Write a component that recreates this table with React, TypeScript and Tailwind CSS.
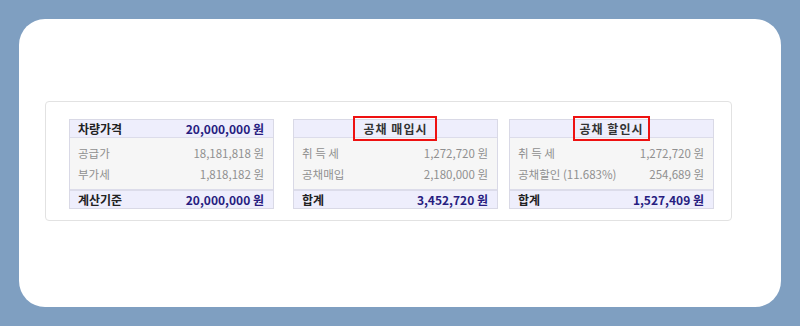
const font = { fontFamily: '"Noto Sans CJK KR", "Noto Sans", sans-serif' };

type Row = { label: string; value: string };

function PriceTable({
  title,
  titleValue,
  rows,
  totalLabel,
  totalValue,
  mark,
}: {
  title: string;
  titleValue?: string;
  rows: Row[];
  totalLabel: string;
  totalValue: string;
  mark?: string;
}) {
  return (
    <div className="relative w-[205px] border border-[#d9d9e6] text-[12px] leading-none">
      {titleValue ? (
        <div className="flex h-[18px] items-center justify-between border-b border-[#dcdcea] bg-[#eeeefc] pl-[8px] pr-[9px] font-bold">
          <span className="text-[#222]">{title}</span>
          <span className="text-[#271c80]">{titleValue}</span>
        </div>
      ) : (
        <div className="flex h-[18px] items-center justify-center border-b border-[#dcdcea] bg-[#eeeefc] font-bold tracking-[1px] text-[#333]">
          {title}
        </div>
      )}
      <div className="bg-[#f6f6f6] pb-[4px] pt-[5px] text-[11.5px]">
        {rows.map((r) => (
          <div key={r.label} className="flex h-[21px] items-center justify-between pl-[8px] pr-[9px] text-[#909090]">
            <span>{r.label}</span>
            <span>{r.value}</span>
          </div>
        ))}
      </div>
      <div className="flex h-[19px] items-center justify-between border-t-2 border-[#dcdcea] bg-[#eeeefc] pl-[8px] pr-[9px] font-bold">
        <span className="text-[#222]">{totalLabel}</span>
        <span className="text-[#271c80]">{totalValue}</span>
      </div>
      {mark && <span className={`pointer-events-none absolute top-[-4px] h-[25px] border-2 border-[#ee1111] ${mark}`} />}
    </div>
  );
}

export default function App() {
  return (
    <div className="h-[326px] w-[800px] bg-[#7f9fc1] p-[19px]" style={font}>
      <div className="h-full rounded-[26px] bg-white pl-[26px] pr-[49px] pt-[82px]">
        <div className="flex h-[120px] items-start rounded-[4px] border border-[#e2e2e2] pl-[23px] pt-[17px]">
          <PriceTable
            title="차량가격"
            titleValue="20,000,000 원"
            rows={[
              { label: "공급가", value: "18,181,818 원" },
              { label: "부가세", value: "1,818,182 원" },
            ]}
            totalLabel="계산기준"
            totalValue="20,000,000 원"
          />
          <div className="w-[19px]" />
          <PriceTable
            title="공채 매입시"
            rows={[
              { label: "취 득 세", value: "1,272,720 원" },
              { label: "공채매입", value: "2,180,000 원" },
            ]}
            totalLabel="합계"
            totalValue="3,452,720 원"
            mark="left-[59px] w-[84px]"
          />
          <div className="w-[11px]" />
          <PriceTable
            title="공채 할인시"
            rows={[
              { label: "취 득 세", value: "1,272,720 원" },
              { label: "공채할인 (11.683%)", value: "254,689 원" },
            ]}
            totalLabel="합계"
            totalValue="1,527,409 원"
            mark="left-[63px] w-[77px]"
          />
        </div>
      </div>
    </div>
  );
}
